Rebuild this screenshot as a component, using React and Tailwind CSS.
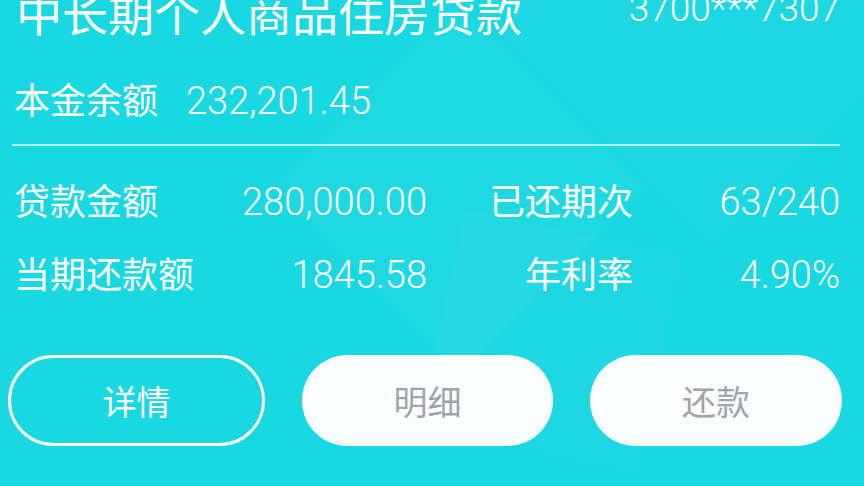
import React from 'react';

const font = { fontFamily: '"Noto Sans CJK SC", "Noto Sans", sans-serif' };
const num = { fontFamily: 'Roboto, "Noto Sans", sans-serif' };

const rows = [
  ['贷款金额', '280,000.00', '已还期次', '63/240'],
  ['当期还款额', '1845.58', '年利率', '4.90%'],
];

const App = () => {
  return (
    <div
      className="relative w-[864px] h-[486px] overflow-hidden bg-[#18d8e2] text-white"
      style={font}
    >
      {/* faint background diamonds */}
      <div className="absolute left-[330px] top-[60px] w-[260px] h-[260px] rotate-45 bg-white/[0.03]" />
      <div className="absolute left-[560px] top-[-120px] w-[300px] h-[300px] rotate-45 bg-white/[0.025]" />
      <div className="absolute left-[440px] top-[230px] w-[220px] h-[220px] rotate-12 bg-white/[0.025]" />

      <div className="relative flex flex-col">
        {/* Title */}
        <div className="flex justify-between items-start h-[44px] pl-[16px] pr-[24px] -mt-[19px]">
          <span className="text-[46px] leading-[60px] whitespace-nowrap">中长期个人商品住房贷款</span>
          <span className="text-[37px] leading-[56px] font-light" style={num}>3700***7307</span>
        </div>

        {/* Principal */}
        <div className="flex items-baseline gap-[28px] pl-[14px] mt-[46px] h-[56px] text-[36px]">
          <span>本金余额</span>
          <span className="text-[38px] font-light" style={num}>232,201.45</span>
        </div>

        <div className="ml-[12px] mr-[24px] mt-[17px] h-[2px] bg-white/70" />

        {/* Details */}
        <div className="mt-[26px] flex flex-col gap-[17px] text-[36px]">
          {rows.map((r, i) => (
            <div key={i} className="grid grid-cols-[200px_213px_206px_207px] pl-[14px] h-[56px] items-baseline">
              <span className="whitespace-nowrap">{r[0]}</span>
              <span className="text-right text-[38px] font-light" style={num}>{r[1]}</span>
              <span className="text-right whitespace-nowrap">{r[2]}</span>
              <span className="text-right text-[38px] font-light" style={num}>{r[3]}</span>
            </div>
          ))}
        </div>

        {/* Buttons */}
        <div className="mt-[54px] flex pl-[8px] gap-[37px] text-[34px]">
          <button className="w-[257px] h-[91px] rounded-full border-[3px] border-white text-white">
            详情
          </button>
          <button className="w-[251px] h-[91px] rounded-full bg-[#fbfcfd] text-[#9fa4ab]">
            明细
          </button>
          <button className="w-[252px] h-[91px] rounded-full bg-[#fbfcfd] text-[#9fa4ab]">
            还款
          </button>
        </div>
      </div>
    </div>
  );
};

export default App;
